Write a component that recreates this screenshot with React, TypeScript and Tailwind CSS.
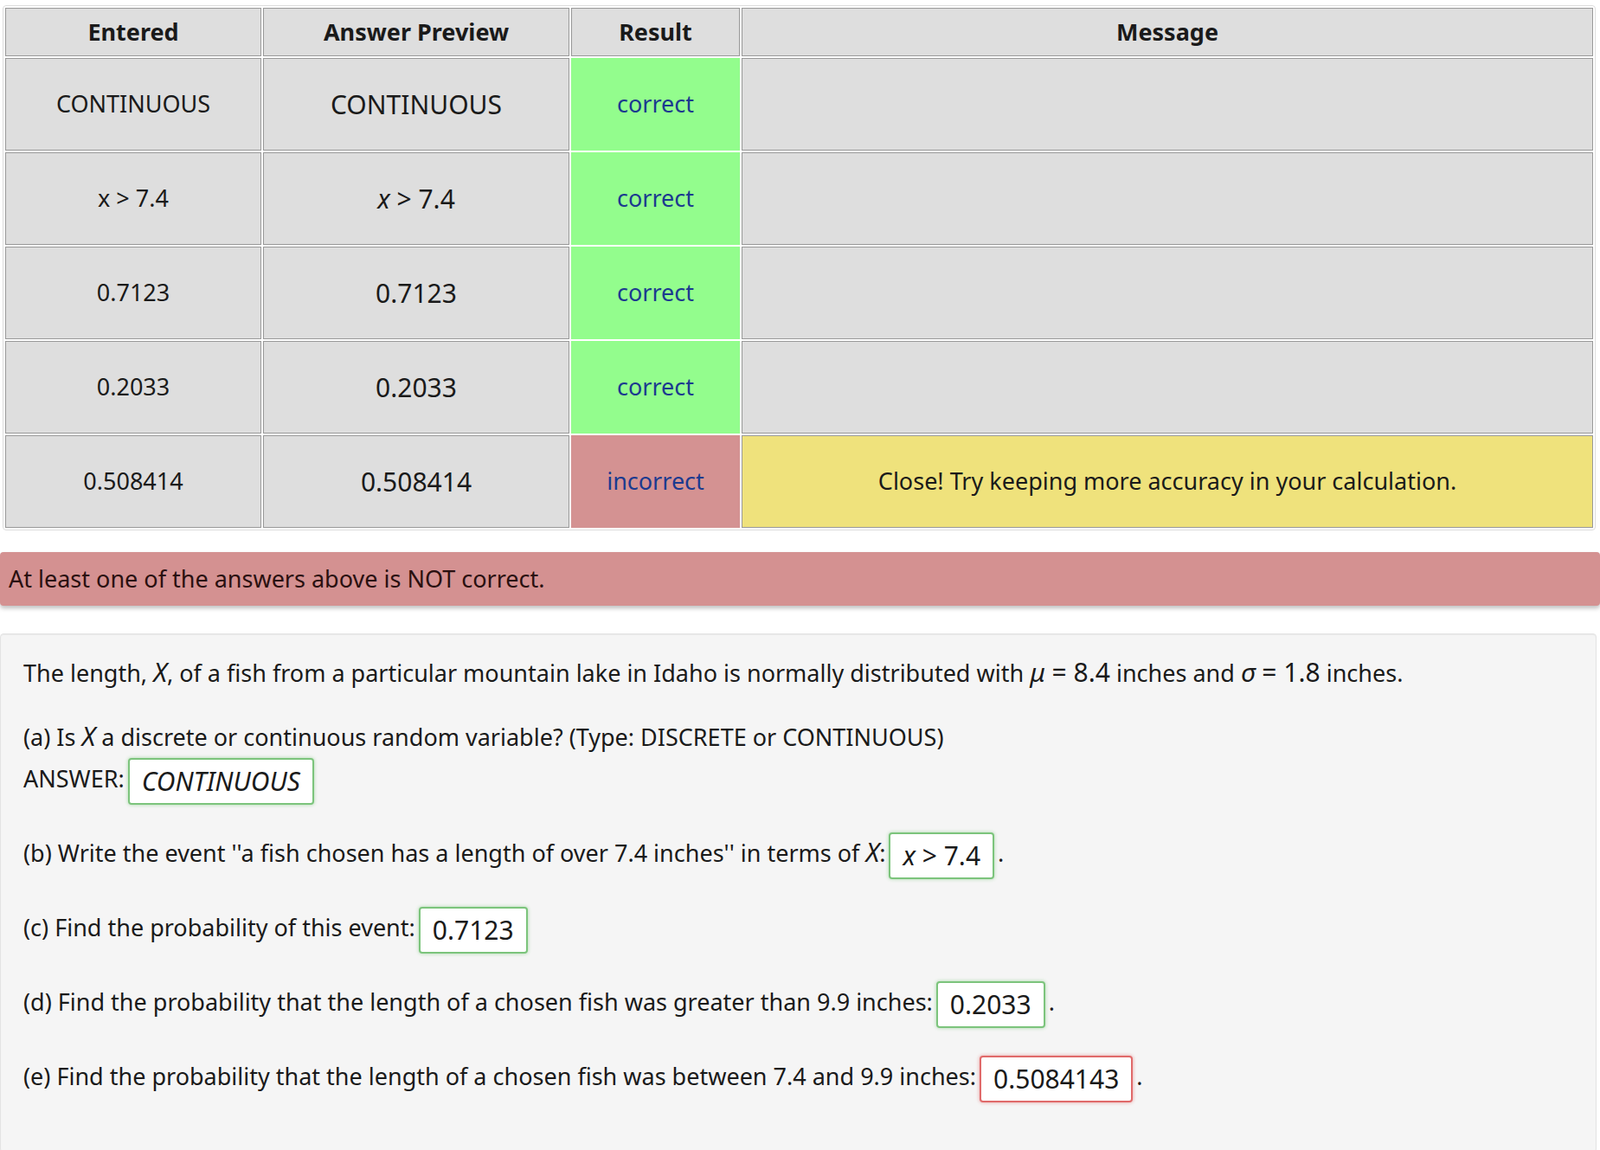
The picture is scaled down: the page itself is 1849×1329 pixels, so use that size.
import React from "react";

const M = ({ children, i = false }: { children: React.ReactNode; i?: boolean }) => (
  <span className={`font-[family-name:'Liberation_Serif',serif] text-[30px] ${i ? "italic" : ""}`}>{children}</span>
);

const Box = ({ children, bad = false }: { children: React.ReactNode; bad?: boolean }) => (
  <span
    className={`inline-flex items-center h-[54px] px-[14px] mx-[4px] bg-white rounded-[4px] border-2 align-middle ${
      bad ? "border-[#e06a6a] shadow-[0_0_4px_#e89a9a]" : "border-[#7cc47c] shadow-[0_0_4px_#a8d8a8]"
    } font-[family-name:'Liberation_Serif',serif] text-[30px]`}
  >
    {children}
  </span>
);

const rows = [
  ["CONTINUOUS", <M>CONTINUOUS</M>, true, ""],
  ["x > 7.4", <M><i>x</i> &gt; 7.4</M>, true, ""],
  ["0.7123", <M>0.7123</M>, true, ""],
  ["0.2033", <M>0.2033</M>, true, ""],
  ["0.508414", <M>0.508414</M>, false, "Close! Try keeping more accuracy in your calculation."],
] as const;

export default function App() {
  return (
    <div className="w-[1849px] h-[1329px] bg-white font-[family-name:'Lato','Noto_Sans',sans-serif] text-[27px] text-[#1a1a1a] overflow-hidden">
      <div className="pt-[6px] pl-[3px] pr-[5px]">
        <table className="w-[1841px] border-separate border-spacing-[2px] bg-white border border-[#ddd] rounded-[4px]">
          <thead>
            <tr className="h-[56px] bg-[#dedede]">
              {["Entered", "Answer Preview", "Result", "Message"].map((h, k) => (
                <th
                  key={h}
                  className={`border border-[#999] font-bold ${["w-[296px]", "w-[354px]", "w-[195px]", ""][k]}`}
                >
                  {h}
                </th>
              ))}
            </tr>
          </thead>
          <tbody>
            {rows.map((r, k) => (
              <tr key={k} className="h-[107px]">
                <td className="bg-[#dedede] border border-[#999] text-center">{r[0]}</td>
                <td className="bg-[#dedede] border border-[#999] text-center">{r[1]}</td>
                <td className={`text-center text-[#1b3a8f] ${r[2] ? "bg-[#93fd8d]" : "bg-[#d49292]"}`}>
                  {r[2] ? "correct" : "incorrect"}
                </td>
                <td className={`text-center border border-[#999] ${r[3] ? "bg-[#efe27c]" : "bg-[#dedede]"}`}>{r[3]}</td>
              </tr>
            ))}
          </tbody>
        </table>
      </div>
      <div className="mt-[25px] h-[62px] flex items-center pl-[10px] bg-[#d49191] rounded-[4px] shadow-[0_3px_5px_rgba(0,0,0,0.25)] text-[#2a1010]">
        At least one of the answers above is NOT correct.
      </div>
      <div className="mt-[32px] w-[1845px] h-[600px] bg-[#f5f5f5] border border-[#e3e3e3] rounded-[4px] shadow-[inset_0_1px_1px_rgba(0,0,0,0.05)] px-[26px] pt-[26px] leading-[36px]">
        <p>
          The length, <M i>X</M>, of a fish from a particular mountain lake in Idaho is normally distributed with{" "}
          <M><i>μ</i> = 8.4</M> inches and <M><i>σ</i> = 1.8</M> inches.
        </p>
        <p className="mt-[37px]">
          (a) Is <M i>X</M> a discrete or continuous random variable? (Type: DISCRETE or CONTINUOUS)
        </p>
        <p className="mt-[6px]">
          ANSWER:<Box><i>CONTINUOUS</i></Box>
        </p>
        <p className="mt-[32px]">
          (b) Write the event ''a fish chosen has a length of over 7.4 inches'' in terms of <M i>X</M>:
          <Box><i>x</i>&nbsp;&gt;&nbsp;7.4</Box>.
        </p>
        <p className="mt-[32px]">
          (c) Find the probability of this event:<Box>0.7123</Box>
        </p>
        <p className="mt-[32px]">
          (d) Find the probability that the length of a chosen fish was greater than 9.9 inches:<Box>0.2033</Box>.
        </p>
        <p className="mt-[32px]">
          (e) Find the probability that the length of a chosen fish was between 7.4 and 9.9 inches:
          <Box bad>0.5084143</Box>.
        </p>
      </div>
    </div>
  );
}
